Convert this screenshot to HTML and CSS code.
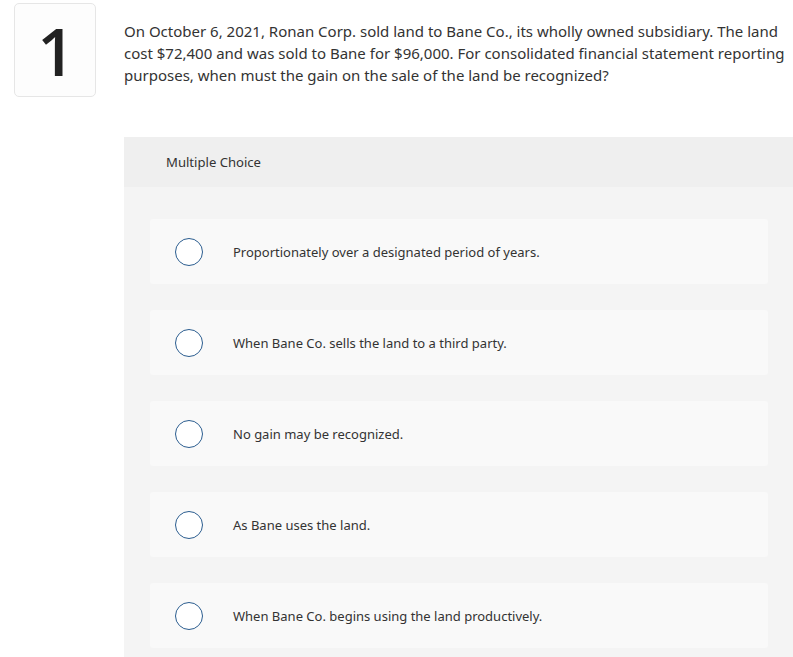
FILE: index.html
```html
<!DOCTYPE html>
<html>
<head>
<meta charset="utf-8">
<link rel="stylesheet" href="styles.css">
</head>
<body>
<div class="page">
  <div class="qhead">
    <div class="qnum">1</div>
    <p class="qtext">On October 6, 2021, Ronan Corp. sold land to Bane Co., its wholly owned subsidiary. The land cost $72,400 and was sold to Bane for $96,000. For consolidated financial statement reporting purposes, when must the gain on the sale of the land be recognized?</p>
  </div>
  <div class="panel">
    <div class="panel-head">Multiple Choice</div>
    <div class="options">
      <div class="option"><span class="radio"></span><span class="label">Proportionately over a designated period of years.</span></div>
      <div class="option"><span class="radio"></span><span class="label">When Bane Co. sells the land to a third party.</span></div>
      <div class="option"><span class="radio"></span><span class="label">No gain may be recognized.</span></div>
      <div class="option"><span class="radio"></span><span class="label">As Bane uses the land.</span></div>
      <div class="option"><span class="radio"></span><span class="label">When Bane Co. begins using the land productively.</span></div>
    </div>
  </div>
</div>
</body>
</html>
```
FILE: styles.css
```css
html, body {
  margin: 0;
  padding: 0;
  background: #ffffff;
  overflow: hidden;
}
.page {
  width: 793px;
  height: 657px;
  font-family: "Noto Sans", "Liberation Sans", sans-serif;
  color: #333333;
}
.qhead {
  display: flex;
  align-items: flex-start;
  padding: 3px 0 0 14px;
}
.qnum {
  box-sizing: border-box;
  width: 82px;
  height: 94px;
  border: 1px solid #e6e6e6;
  border-radius: 5px;
  background: #fdfdfd;
  display: flex;
  align-items: center;
  justify-content: center;
  padding-left: 2px;
  font-family: "Open Sans", "Noto Sans", sans-serif;
  font-size: 66px;
  font-weight: 600;
  color: #222222;
  line-height: 1;
}
.qtext {
  margin: 17px 0 0 28px;
  font-size: 15px;
  line-height: 22px;
  color: #333333;
  width: 665px;
}
.panel {
  margin: 40px 0 0 124px;
  background: #f4f4f4;
  height: 520px;
}
.panel-head {
  height: 50px;
  background: #efefef;
  display: flex;
  align-items: center;
  padding-left: 42px;
  font-size: 13.1px;
  color: #333333;
}
.options {
  display: flex;
  flex-direction: column;
  gap: 26px;
  padding: 32px 25px 0 26px;
}
.option {
  height: 65px;
  background: #f9f9f9;
  border-radius: 3px;
  display: flex;
  align-items: center;
  padding-left: 25px;
}
.radio {
  box-sizing: border-box;
  width: 28px;
  height: 28px;
  border: 1.5px solid #2b5d8f;
  border-radius: 50%;
  background: #ffffff;
  flex: none;
}
.label {
  margin-left: 30px;
  font-size: 13px;
  color: #333333;
}
```
